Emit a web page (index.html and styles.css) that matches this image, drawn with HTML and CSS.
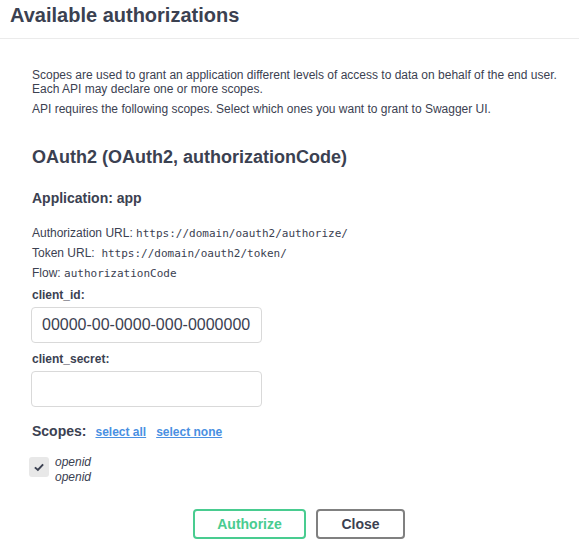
FILE: index.html
```html
<!DOCTYPE html>
<html lang="en">
<head>
<meta charset="utf-8">
<title>Available authorizations</title>
<link rel="stylesheet" href="styles.css">
</head>
<body>
<div class="header">
  <h3 class="title">Available authorizations</h3>
</div>
<div class="content">
  <p class="intro">Scopes are used to grant an application different levels of access to data on behalf of the end user.<br>Each API may declare one or more scopes.</p>
  <p class="intro second">API requires the following scopes. Select which ones you want to grant to Swagger UI.</p>

  <h4 class="scheme">OAuth2 (OAuth2, authorizationCode)</h4>
  <h6 class="app">Application: app</h6>

  <p class="meta first">Authorization URL: <code>https://domain/oauth2/authorize/</code></p>
  <p class="meta">Token URL:&nbsp; <code>https://domain/oauth2/token/</code></p>
  <p class="meta">Flow: <code>authorizationCode</code></p>

  <label class="field-label l-id">client_id:</label>
  <input class="text-input" type="text" value="00000-00-0000-000-0000000">
  <label class="field-label l-secret">client_secret:</label>
  <input class="text-input" type="text" value="">

  <div class="scopes-row">
    <span class="scopes-title">Scopes:</span>
    <a class="scope-link first-link" href="#">select all</a>
    <a class="scope-link" href="#">select none</a>
  </div>

  <div class="scope-item">
    <span class="check">
      <svg width="12" height="12" viewBox="0 0 16 16"><polyline points="2.5,8.5 6.5,12 13.5,4.5" fill="none" stroke="#3b4151" stroke-width="2.6"/></svg>
    </span>
    <div class="scope-text">
      <span>openid</span>
      <span>openid</span>
    </div>
  </div>

  <div class="actions">
    <button class="btn authorize">Authorize</button>
    <button class="btn close">Close</button>
  </div>
</div>
</body>
</html>
```
FILE: styles.css
```css
html, body {
  margin: 0;
  padding: 0;
  background: #fff;
}
body {
  font-family: "Liberation Sans", Arial, sans-serif;
  color: #3b4151;
}
.header {
  padding: 4px 10px 11px;
  border-bottom: 1px solid #ebebeb;
}
.title {
  margin: 0;
  font-size: 20px;
  line-height: 23px;
  font-weight: 700;
  color: #3b4151;
}
.content {
  padding: 0 13px 0 32px;
  display: flex;
  flex-direction: column;
  align-items: flex-start;
}
.intro {
  margin: 29px 0 0;
  font-size: 12px;
  line-height: 14px;
}
.intro.second {
  margin-top: 6px;
}
.scheme {
  margin: 31px 0 0;
  font-size: 18px;
  line-height: 21px;
  font-weight: 700;
}
.app {
  margin: 22px 0 0;
  font-size: 14px;
  line-height: 16px;
  font-weight: 700;
}
.meta {
  margin: 5px 0 0;
  font-size: 12px;
  line-height: 14px;
}
.meta.first {
  margin-top: 20px;
}
code {
  font-family: "DejaVu Sans Mono", monospace;
  font-size: 11px;
}
.field-label {
  font-size: 12px;
  line-height: 14px;
  font-weight: 700;
}
.l-id {
  margin-top: 7px;
}
.l-secret {
  margin-top: 9px;
}
.text-input {
  box-sizing: border-box;
  margin: 5px 0 0 -1px;
  width: 231px;
  height: 36px;
  padding: 0 10px;
  border: 1px solid #d9d9d9;
  border-radius: 4px;
  background: #fff;
  font-family: "Liberation Sans", Arial, sans-serif;
  font-size: 16px;
  color: #3b4151;
  outline: none;
}
.scopes-row {
  margin-top: 16px;
  display: flex;
  align-items: baseline;
}
.scopes-title {
  font-size: 14px;
  line-height: 16px;
  font-weight: 700;
}
.scope-link {
  font-size: 12px;
  font-weight: 700;
  color: #4990e2;
  text-decoration: underline;
  margin-left: 10px;
}
.scope-link.first-link {
  margin-left: 9px;
}
.scope-item {
  margin: 18px 0 0 -3px;
  display: flex;
  align-items: flex-start;
  gap: 6px;
}
.check {
  width: 20px;
  height: 20px;
  border-radius: 3px;
  background: #e8e8e8;
  display: flex;
  align-items: center;
  justify-content: center;
}
.scope-text {
  display: flex;
  flex-direction: column;
  font-size: 12px;
  line-height: 15px;
  font-style: italic;
  margin-top: -2px;
}
.actions {
  align-self: stretch;
  margin-top: 24px;
  display: flex;
  justify-content: center;
  gap: 10px;
}
.btn {
  box-sizing: border-box;
  height: 30px;
  padding: 0 22px;
  border-radius: 4px;
  background: transparent;
  font-family: "Liberation Sans", Arial, sans-serif;
  font-size: 14px;
  font-weight: 700;
  line-height: 16px;
}
.btn.authorize {
  width: 113px;
  border: 2px solid #49cc90;
  color: #49cc90;
}
.btn.close {
  width: 89px;
  border: 2px solid #808080;
  color: #3b4151;
}
```
